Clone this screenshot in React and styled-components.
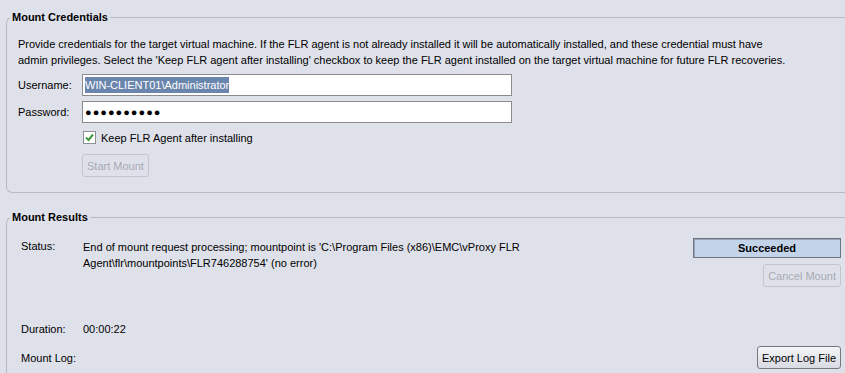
import styled, { createGlobalStyle } from "styled-components";

const GlobalStyle = createGlobalStyle`
  body {
    margin: 0;
    background: #dfe1ea;
    font-family: "Liberation Sans", Arial, sans-serif;
    font-size: 11px;
    color: #000;
  }
`;

const Page = styled.div`
  width: 845px;
  height: 373px;
  overflow: hidden;
  padding: 10px 0 0 6px;
  box-sizing: border-box;
  display: flex;
  flex-direction: column;
  gap: 17px;
`;

const Group = styled.fieldset`
  margin: 0;
  padding: 0;
  border: 1px solid #b9bbc4;
  border-right: none;
  border-radius: 6px 0 0 6px;
  min-width: 0;
  display: flex;
  flex-direction: column;
  ${props => props.open && "border-bottom: none; border-bottom-left-radius: 0; flex: 1;"}
`;

const Title = styled.legend`
  font-weight: bold;
  font-size: 11px;
  padding: 0 2px;
  margin-left: 3px;
  line-height: 14px;
`;

const Body = styled.div`
  flex: 1;
  display: flex;
  flex-direction: column;
  padding: 0 4px 0 ${props => props.indent}px;
`;

const Description = styled.p`
  margin: 12px 0 6px;
  line-height: 16px;
  white-space: nowrap;
`;

const FieldRow = styled.div`
  display: flex;
  align-items: center;
  margin-bottom: 5px;
`;

const Label = styled.label`
  width: ${props => props.width}px;
  flex-shrink: 0;
  line-height: 16px;
`;

const TextBox = styled.div`
  width: 430px;
  height: 22px;
  box-sizing: border-box;
  border: 1px solid #8c8c8c;
  background: #fff;
  display: flex;
  align-items: center;
  padding-left: 2px;
`;

const Selected = styled.span`
  background: #6a86ad;
  color: #fff;
  line-height: 16px;
`;

const Dots = styled.span`
  font-size: 11px;
  letter-spacing: 1px;
  line-height: 16px;
`;

const CheckRow = styled.div`
  display: flex;
  align-items: center;
  gap: 5px;
  margin: 3px 0 10px 65px;
`;

const CheckBox = styled.span`
  width: 13px;
  height: 13px;
  box-sizing: border-box;
  border: 1px solid #8e8f95;
  background: #fff;
  display: flex;
  align-items: center;
  justify-content: center;
`;

const Button = styled.button`
  height: 23px;
  box-sizing: border-box;
  padding: 0 4px;
  font-family: inherit;
  font-size: 11px;
  border-radius: 3px;
  border: 1px solid ${props => (props.disabled ? "#c3c5cd" : "#767880")};
  color: ${props => (props.disabled ? "#a7a9b1" : "#000")};
  background: ${props =>
    props.disabled ? "#dfe1ea" : "linear-gradient(#f4f5f8, #d9dbe2)"};
`;

const StartRow = styled.div`
  margin: 0 0 15px 64px;
`;

const StatusRow = styled.div`
  display: flex;
  margin-top: 14px;
`;

const StatusText = styled.div`
  width: 470px;
  line-height: 16px;
  padding-top: 1px;
`;

const RightColumn = styled.div`
  margin-left: auto;
  display: flex;
  flex-direction: column;
  align-items: flex-end;
  gap: 6px;
`;

const StateBox = styled.div`
  width: 148px;
  height: 20px;
  box-sizing: border-box;
  border: 1px solid #6d7584;
  box-shadow: inset 1px 1px 0 #98a3b5;
  background: #c2d3ea;
  font-weight: bold;
  display: flex;
  align-items: center;
  justify-content: center;
`;

const InfoRow = styled.div`
  display: flex;
  align-items: center;
  margin-top: ${props => props.top}px;
  line-height: 16px;
`;

const LogHeader = styled.div`
  display: flex;
  align-items: center;
  justify-content: space-between;
  margin-top: 9px;
`;

const LogBox = styled.div`
  margin: 4px 0 0 -3px;
  flex: 1;
  border: 1px solid #8c8c8c;
  background: #fff;
`;

export default function App() {
  return (
    <>
      <GlobalStyle />
      <Page>
        <Group>
          <Title>Mount Credentials</Title>
          <Body indent={11}>
            <Description>
              Provide credentials for the target virtual machine. If the FLR agent is not already installed it will be automatically installed, and these credential must have
              <br />
              admin privileges. Select the 'Keep FLR agent after installing' checkbox to keep the FLR agent installed on the target virtual machine for future FLR recoveries.
            </Description>
            <FieldRow>
              <Label width={64}>Username:</Label>
              <TextBox>
                <Selected>WIN-CLIENT01\Administrator</Selected>
              </TextBox>
            </FieldRow>
            <FieldRow>
              <Label width={64}>Password:</Label>
              <TextBox>
                <Dots>●●●●●●●●●●</Dots>
              </TextBox>
            </FieldRow>
            <CheckRow>
              <CheckBox>
                <svg width="9" height="9" viewBox="0 0 9 9">
                  <path d="M1 4.5 L3.5 7 L8 1.5" fill="none" stroke="#3f9a3c" strokeWidth="2" />
                </svg>
              </CheckBox>
              <span>Keep FLR Agent after installing</span>
            </CheckRow>
            <StartRow>
              <Button disabled>Start Mount</Button>
            </StartRow>
          </Body>
        </Group>

        <Group open>
          <Title>Mount Results</Title>
          <Body indent={14}>
            <StatusRow>
              <Label width={62}>Status:</Label>
              <StatusText>
                End of mount request processing; mountpoint is 'C:\Program Files (x86)\EMC\vProxy FLR Agent\flr\mountpoints\FLR746288754' (no error)
              </StatusText>
              <RightColumn>
                <StateBox>Succeeded</StateBox>
                <Button disabled>Cancel Mount</Button>
              </RightColumn>
            </StatusRow>
            <InfoRow top={34}>
              <Label width={62}>Duration:</Label>
              <span>00:00:22</span>
            </InfoRow>
            <LogHeader>
              <Label width={80}>Mount Log:</Label>
              <Button>Export Log File</Button>
            </LogHeader>
            <LogBox />
          </Body>
        </Group>
      </Page>
    </>
  );
}
